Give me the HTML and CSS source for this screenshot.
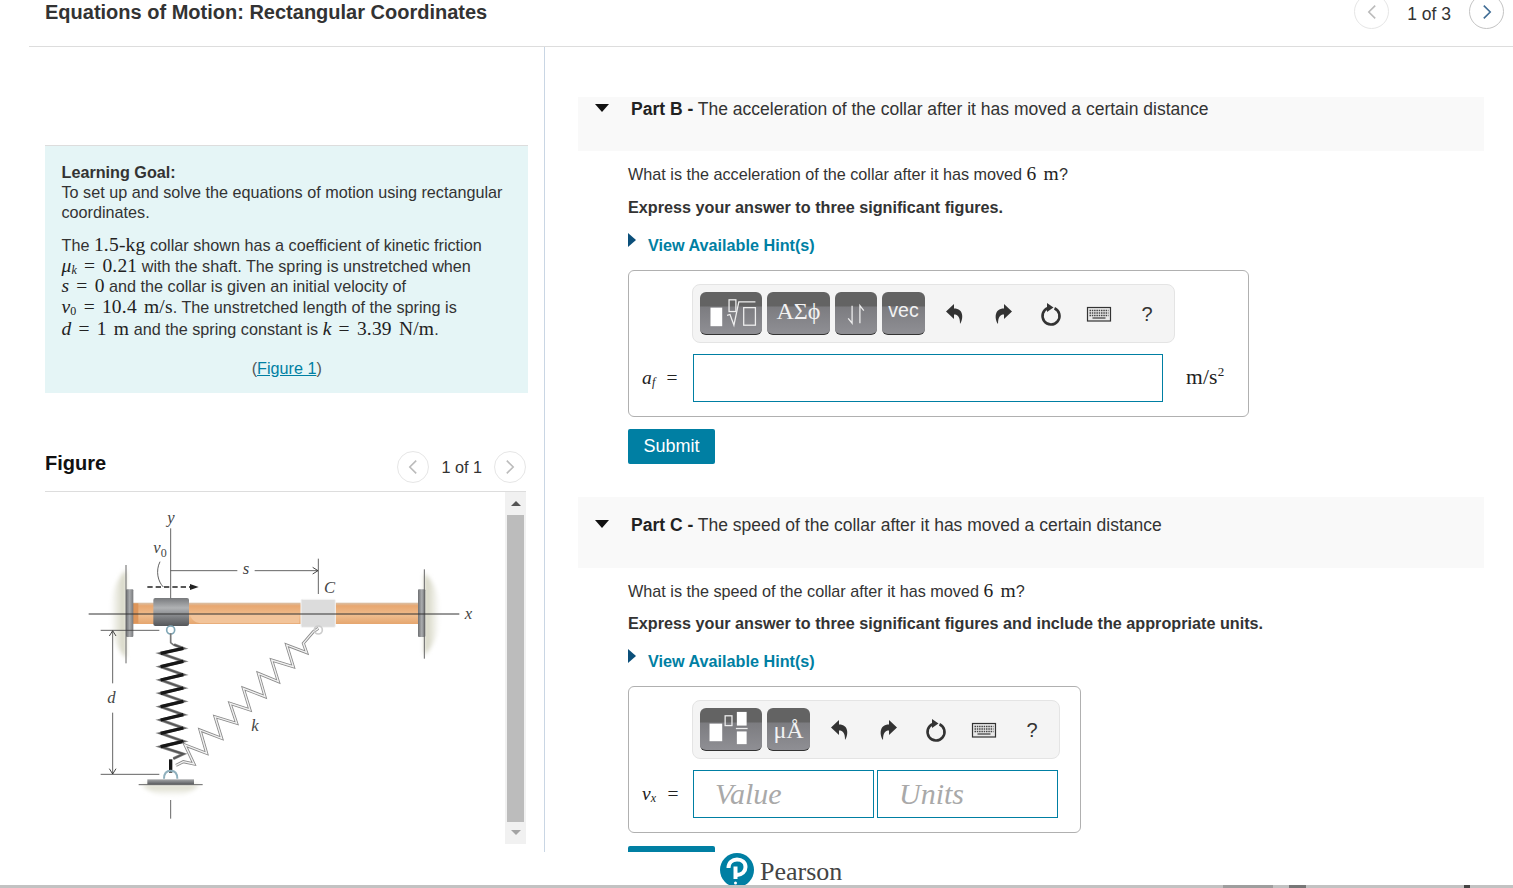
FILE: index.html
```html
<!DOCTYPE html>
<html lang="en">

<head>
    <meta charset="UTF-8">
    <title>Equations of Motion: Rectangular Coordinates</title>
    <link rel="stylesheet" href="styles.css">
</head>

<body>
    <svg class="sprites" width="0" height="0">
        <symbol id="undo" viewBox="0 0 48 24"><path d="M23 2 15 9.500 23 17V12.500C27 12.500 29 15 29 22 32.500 17 33 6.500 23 6.500z"/></symbol>
        <symbol id="redo" viewBox="0 0 48 24"><path d="M25 2 33 9.500 25 17V12.500C21 12.500 19 15 19 22 15.500 17 15 6.500 25 6.500z"/></symbol>
        <symbol id="reset" viewBox="0 0 48 24"><path class="ring" d="M27.500 6.200A8.500 8.500 0 1 1 21 6"/><path d="M20 1l6.500 4.500L20 10z"/></symbol>
        <symbol id="keys" viewBox="0 0 48 24">
            <rect class="kb" x="12.500" y="5.500" width="23" height="13.500"/>
            <path class="kb-dots" d="M14.500 8.500h19M14.500 11h19M14.500 13.500h19"/>
            <path class="kb-bar" d="M17.500 16h13"/>
        </symbol>
    </svg>

    <header class="top">
        <h1>Equations of Motion: Rectangular Coordinates</h1>
        <div class="pager pager-top">
            <span class="round off"><svg viewBox="0 0 12 20"><path d="M10 2 2 10l8 8"/></svg></span>
            <span class="count">1 of 3</span>
            <span class="round"><svg viewBox="0 0 12 20"><path d="M2 2l8 8-8 8"/></svg></span>
        </div>
    </header>

    <main class="main">
        <section class="left">
            <div class="goal">
                <p><b>Learning Goal:</b><br>To set up and solve the equations of motion using rectangular coordinates.</p>
                <p class="statement">The <span class="m">1.5-kg</span> collar shown has a coefficient of kinetic friction<br>
                    <span class="m"><i>μ<sub>k</sub></i> = 0.21</span> with the shaft. The spring is unstretched when<br>
                    <span class="m"><i>s</i> = 0</span> and the collar is given an initial velocity of<br>
                    <span class="m"><i>v</i><sub>0</sub> = 10.4 m/s</span>. The unstretched length of the spring is<br>
                    <span class="lastline"><span class="m"><i>d</i> = 1 m</span> and the spring constant is <span class="m"><i>k</i> = 3.39 N/m</span>.</span></p>
                <p class="figlink">(<a href="#">Figure 1</a>)</p>
            </div>

            <div class="fig-head">
                <h2>Figure</h2>
                <div class="pager">
                    <span class="round off"><svg viewBox="0 0 12 20"><path d="M10 2 2 10l8 8"/></svg></span>
                    <span class="count">1 of 1</span>
                    <span class="round off"><svg viewBox="0 0 12 20"><path d="M2 2l8 8-8 8"/></svg></span>
                </div>
            </div>
            <div class="fig-body">
                <!-- drawn in 3x units -->
                <svg class="diagram" viewBox="15 6 1380 1056" width="460" height="352">
                    <defs>
                        <linearGradient id="rod" x1="0" y1="0" x2="0" y2="1">
                            <stop offset="0" stop-color="#d9c2aa"/>
                            <stop offset=".15" stop-color="#e8a770"/>
                            <stop offset=".6" stop-color="#f0bd8d"/>
                            <stop offset="1" stop-color="#e5a66f"/>
                        </linearGradient>
                        <linearGradient id="steel" x1="0" y1="0" x2="0" y2="1">
                            <stop offset="0" stop-color="#77797c"/>
                            <stop offset=".35" stop-color="#b0b2b4"/>
                            <stop offset=".7" stop-color="#7c7e81"/>
                            <stop offset="1" stop-color="#55575a"/>
                        </linearGradient>
                        <linearGradient id="plate" x1="0" y1="0" x2="1" y2="0">
                            <stop offset="0" stop-color="#6d6f72"/>
                            <stop offset=".5" stop-color="#a9abad"/>
                            <stop offset="1" stop-color="#77797c"/>
                        </linearGradient>
                        <linearGradient id="base" x1="0" y1="0" x2="0" y2="1">
                            <stop offset="0" stop-color="#a5a7a9"/>
                            <stop offset="1" stop-color="#55575a"/>
                        </linearGradient>
                        <linearGradient id="shade-l" x1="1" y1="0" x2="0" y2="0">
                            <stop offset="0" stop-color="#cfcfba"/>
                            <stop offset="1" stop-color="#fff"/>
                        </linearGradient>
                        <linearGradient id="shade-r" x1="0" y1="0" x2="1" y2="0">
                            <stop offset="0" stop-color="#cfcfba"/>
                            <stop offset="1" stop-color="#fff"/>
                        </linearGradient>
                        <linearGradient id="shade-b" x1="0" y1="0" x2="0" y2="1">
                            <stop offset="0" stop-color="#d5d5c2"/>
                            <stop offset="1" stop-color="#fff"/>
                        </linearGradient>
                        <filter id="soft" x="-30%" y="-30%" width="160%" height="160%"><feGaussianBlur stdDeviation="7"/></filter>
                    </defs>

                    <g filter="url(#soft)">
                        <path d="M258 240C195 300 195 440 258 505z" fill="url(#shade-l)"/>
                        <path d="M1153 250C1215 300 1215 440 1153 495z" fill="url(#shade-r)"/>
                        <path d="M306 884C350 930 434 930 478 884z" fill="url(#shade-b)"/>
                    </g>

                    <rect x="275" y="338" width="862" height="64" fill="url(#rod)"/>
                    <rect x="275" y="340" width="20" height="60" fill="#dd955a"/>
                    <path d="M448 372c8 20 20 28 40 28H778v-28z" fill="#f2c49a"/>
                    <rect x="258" y="298" width="22" height="143" rx="3" fill="url(#plate)"/>
                    <rect x="1134" y="298" width="22" height="143" rx="3" fill="url(#plate)"/>
                    <path class="ln" d="M258 225v295M1153 238v268"/>

                    <rect x="340" y="324" width="107" height="84" rx="6" fill="url(#steel)"/>
                    <rect x="783" y="328" width="103" height="84" rx="4" fill="#dcdcdc" stroke="#f4f4f4" stroke-width="3"/>

                    <path class="ln" d="M392 115V325M392 930v56M835 206v106"/>
                    <path class="axis" d="M146 372h1112"/>
                    <path class="dim" d="M392 242h200M644 242h188M182 421h176M182 853h176M218 424v156M218 668v184"/>
                    <path class="tip" d="M818 232l16 10-16 10M208 438l10-16 10 16M208 836l10 16 10-16"/>
                    <path class="dash" d="M322 291h128"/>
                    <path d="M450 282l26 9-26 9z" fill="#222"/>
                    <path class="dim" d="M360 215c-14 28-6 60 10 76"/>

                    <circle cx="392" cy="420" r="12" fill="none" stroke="#7fa6b5" stroke-width="5"/>
                    <path class="wire" d="M392 430v28l10 8"/>
                    <path class="coil-out" d="M402 464l28 11-68 15 68 24-68 16 68 24-68 16 68 24-68 16 68 24-68 16 68 24-68 16 68 24-68 16 68 24-68 16 68 22-30 14"/>
                    <path class="coil-mid" d="M402 464l28 11-68 15 68 24-68 16 68 24-68 16 68 24-68 16 68 24-68 16 68 24-68 16 68 24-68 16 68 24-68 16 68 22-30 14"/>
                    <path class="coil-dark" d="M430 475l-68 15M430 514l-68 16M430 554l-68 16M430 594l-68 16M430 634l-68 16M430 674l-68 16M430 714l-68 16M430 754l-68 16"/>
                    <path class="coil-dark" d="M392 808v40"/>

                    <path class="coil-out" d="M408 826l22-11 32 7-27-57 65 25-20-70 65 25-20-65 65 20-20-60 60 20-20-65 65 25-20-70 60 25-20-65 65 20-20-65 60 23-10-28 30-35 15-10"/>
                    <path class="coil-in" d="M408 826l22-11 32 7-27-57 65 25-20-70 65 25-20-65 65 20-20-60 60 20-20-65 65 25-20-70 60 25-20-65 65 20-20-65 60 23-10-28 30-35 15-10"/>
                    <circle cx="835" cy="420" r="12" fill="none" stroke="#ccc" stroke-width="5"/>

                    <path d="M372 866c0-16 8-24 20-24s20 8 20 24" fill="none" stroke="#8fb0bd" stroke-width="6"/>
                    <rect x="322" y="868" width="140" height="16" fill="url(#base)"/>
                    <path class="ln" d="M296 884h192"/>

                    <text class="lbl" x="382" y="98">y</text>
                    <text class="lbl" x="340" y="188">v<tspan class="lbl-up" dy="12">0</tspan></text>
                    <text class="lbl" x="608" y="252">s</text>
                    <text class="lbl" x="852" y="310">C</text>
                    <text class="lbl" x="1274" y="386">x</text>
                    <text class="lbl" x="202" y="640">d</text>
                    <text class="lbl" x="634" y="722">k</text>
                </svg>
                <div class="scroll">
                    <span class="arr up"></span>
                    <div class="thumb"></div>
                    <span class="arr down"></span>
                </div>
            </div>
        </section>

        <section class="right">
            <div class="part part-b"><span class="caret"></span><b>Part B -</b> The acceleration of the collar after it has moved a certain distance</div>
            <p class="q">What is the acceleration of the collar after it has moved <span class="m">6 m</span>?</p>
            <p class="q strong">Express your answer to three significant figures.</p>
            <p class="hint"><span class="hint-caret"></span><a href="#">View Available Hint(s)</a></p>

            <div class="answer answer-b">
                <div class="bar">
                    <span class="btn w62">
                        <svg viewBox="0 0 62 43"><rect class="wh" x="10" y="16" width="12" height="19"/><rect class="tr" x="29" y="8" width="7" height="12"/><path class="tr" d="M27 24l3-1 4 11 5-24h17"/><rect class="tr" x="44" y="16" width="12" height="18"/></svg>
                    </span>
                    <span class="btn w63 sym">ΑΣϕ</span>
                    <span class="btn w42">
                        <svg viewBox="0 0 42 43"><path class="tr" d="M17 14v18l-4-5M25 32V14l4 5"/></svg>
                    </span>
                    <span class="btn w43 vec">vec</span>
                    <span class="tools">
                        <svg class="tool"><use href="#undo"/></svg>
                        <svg class="tool"><use href="#redo"/></svg>
                        <svg class="tool"><use href="#reset"/></svg>
                        <svg class="tool"><use href="#keys"/></svg>
                        <span class="tool help">?</span>
                    </span>
                </div>
                <div class="row">
                    <span class="lab m"><i>a<sub>f</sub></i> =</span>
                    <input class="inp wide" type="text">
                    <span class="unit m">m/s<sup>2</sup></span>
                </div>
            </div>
            <button class="submit">Submit</button>

            <div class="part part-c"><span class="caret"></span><b>Part C -</b> The speed of the collar after it has moved a certain distance</div>
            <p class="q">What is the speed of the collar after it has moved <span class="m">6 m</span>?</p>
            <p class="q strong tight">Express your answer to three significant figures and include the appropriate units.</p>
            <p class="hint"><span class="hint-caret"></span><a href="#">View Available Hint(s)</a></p>

            <div class="answer answer-c">
                <div class="bar">
                    <span class="btn w62">
                        <svg viewBox="0 0 62 43"><rect class="wh" x="9" y="16" width="13" height="18"/><rect class="tr" x="25" y="8" width="7" height="10"/><rect class="wh" x="37" y="4" width="10" height="14"/><path class="tr" d="M36 21h12"/><rect class="wh" x="37" y="24" width="10" height="13"/></svg>
                    </span>
                    <span class="btn w43 mu">μÅ</span>
                    <span class="tools">
                        <svg class="tool"><use href="#undo"/></svg>
                        <svg class="tool"><use href="#redo"/></svg>
                        <svg class="tool"><use href="#reset"/></svg>
                        <svg class="tool"><use href="#keys"/></svg>
                        <span class="tool help">?</span>
                    </span>
                </div>
                <div class="row">
                    <span class="lab m"><i>v<sub>x</sub></i> =</span>
                    <input class="inp half" type="text" placeholder="Value">
                    <input class="inp half" type="text" placeholder="Units">
                </div>
            </div>
            <button class="submit"></button>
        </section>
    </main>

    <footer class="foot">
        <svg class="logo" viewBox="0 0 34 34" width="34" height="34">
            <circle cx="17" cy="17" r="17" fill="#007fa3"/>
            <path class="logo-p" d="M8.500 15C8.500 9.500 12.500 6.500 17 6.500 22 6.500 25.500 9.500 25.500 14 25.500 18.500 22 21.500 17 22M15.500 13.500V26"/>
            <circle cx="15.500" cy="30" r="1.500" fill="#fff"/>
        </svg>
        <span class="brand">Pearson</span>
    </footer>
    <div class="edge"></div>
</body>

</html>
```

FILE: styles.css
```css
html,
body {
    margin: 0;
    height: 100%;
    overflow: hidden;
    background: #fff;
}

body {
    font-family: "Liberation Sans", Arial, sans-serif;
    font-size: 16.200px;
    color: #333;
    display: flex;
    flex-direction: column;
}

.sprites {
    position: absolute;
}

p {
    margin: 0;
}

a {
    color: #007fa3;
}

/* math runs */
.m {
    font-family: "Liberation Serif", "Times New Roman", serif;
    font-size: 19.500px;
    line-height: 1;
    letter-spacing: .2px;
    word-spacing: 2px;
    color: #222;
}

.m sub {
    font-size: 12px;
    line-height: 0;
    vertical-align: -2px;
}

.m sup {
    font-size: 13px;
    line-height: 0;
}

/* header */
.top {
    height: 46px;
    margin-left: 29px;
    border-bottom: 1px solid #ddd;
    display: flex;
    justify-content: space-between;
    flex: none;
}

.top h1 {
    margin: 0 0 0 16px;
    font-size: 20px;
    line-height: 24px;
    color: #333;
}

.pager {
    display: flex;
    align-items: center;
}

.pager-top {
    height: 35px;
    margin-top: -6px;
    margin-right: 9px;
}

.round {
    width: 33px;
    height: 33px;
    border: 1px solid #c4c4c4;
    border-radius: 50%;
    display: flex;
    align-items: center;
    justify-content: center;
    background: #fff;
}

.round svg {
    width: 10px;
    height: 16px;
    fill: none;
    stroke: #3f6c94;
    stroke-width: 2;
}

.round.off {
    border-color: #e6e6e6;
}

.round.off svg {
    stroke: #bbb;
}

.count {
    margin: 0 12px;
}

.pager-top .count {
    margin: 6px 18px 0;
    font-size: 17.500px;
}

.main {
    height: 805px;
    flex: none;
    display: flex;
}

/* left column */
.left {
    width: 483px;
    margin-left: 45px;
    margin-right: 16px;
    padding-top: 98px;
    flex: none;
}

.goal {
    height: 248px;
    box-sizing: border-box;
    border-top: 1px solid #ddd;
    background: #e5f5f6;
    padding: 16px 16px 0 16.500px;
    line-height: 20px;
}

.statement {
    margin-top: 13px;
    line-height: 20.500px;
}

.lastline {
    display: block;
    margin-top: 2px;
}

.figlink {
    margin-top: 18px;
    text-align: center;
    color: #555;
}

.fig-head {
    width: 481px;
    height: 40px;
    margin-top: 58px;
    display: flex;
    justify-content: space-between;
    align-items: flex-start;
}

.fig-head h2 {
    margin: 0;
    font-size: 20px;
    line-height: 24px;
    color: #111;
}

.fig-head .round {
    width: 30px;
    height: 30px;
}

.fig-body {
    width: 481px;
    height: 352px;
    border-top: 1px solid #ddd;
    display: flex;
}

.diagram {
    width: 460px;
    height: 352px;
    display: block;
    flex: none;
}

.scroll {
    width: 21px;
    background: #f1f1f1;
    display: flex;
    flex-direction: column;
    align-items: center;
}

.thumb {
    width: 17px;
    height: 307px;
    background: #bcbcbc;
}

.arr {
    width: 0;
    height: 0;
    border-left: 5px solid transparent;
    border-right: 5px solid transparent;
}

.arr.up {
    margin: 9px 0 9px;
    border-bottom: 5px solid #555;
}

.arr.down {
    margin: 8px 0;
    border-top: 5px solid #a3a3a3;
}

/* diagram strokes */
.ln {
    fill: none;
    stroke: #666;
    stroke-width: 3;
}

.axis {
    fill: none;
    stroke: #333;
    stroke-width: 3;
}

.dim {
    fill: none;
    stroke: #444;
    stroke-width: 2.500;
}

.tip {
    fill: none;
    stroke: #222;
    stroke-width: 2.500;
}

.dash {
    fill: none;
    stroke: #222;
    stroke-width: 4;
    stroke-dasharray: 16 9;
}

.wire {
    fill: none;
    stroke: #777;
    stroke-width: 5;
}

.coil-dark {
    fill: none;
    stroke: #161616;
    stroke-width: 10;
}

.coil-mid {
    fill: none;
    stroke: #555;
    stroke-width: 5;
}

.coil-out {
    fill: none;
    stroke: #8a8a8a;
    stroke-width: 9;
}

.coil-in {
    fill: none;
    stroke: #f2f2f2;
    stroke-width: 4;
}

.lbl {
    font-family: "Liberation Serif", serif;
    font-style: italic;
    font-size: 50px;
    fill: #444;
}

.lbl-up {
    font-style: normal;
    font-size: 36px;
}

/* right column */
.right {
    flex: 1;
    min-width: 0;
    border-left: 1px solid #c9d6e4;
    padding: 50px 29px 0 33px;
    overflow: hidden;
}

.part {
    display: block;
    padding: 1px 0 0 53px;
    background: #f9f9f9;
    font-size: 17.500px;
    line-height: 22px;
    position: relative;
    box-sizing: border-box;
    color: #333;
}

.part b {
    color: #222;
}

.part-b {
    height: 54px;
}

.part-c {
    height: 71px;
    margin-top: 33px;
    padding-top: 17px;
}

.caret {
    position: absolute;
    left: 17px;
    top: 7px;
    border-left: 7px solid transparent;
    border-right: 7px solid transparent;
    border-top: 8px solid #111;
}

.part-c .caret {
    top: 23px;
}

.q {
    margin: 13px 0 0 50px;
    line-height: 20px;
}

.strong {
    font-weight: bold;
    color: #333;
}

.tight {
    margin-top: 12px;
}

.hint {
    margin: 18px 0 0 50px;
    line-height: 20px;
    font-weight: bold;
    padding-left: 20px;
    position: relative;
}

.hint a {
    text-decoration: none;
}

.hint-caret {
    position: absolute;
    left: 0;
    top: -2px;
    border-top: 7px solid transparent;
    border-bottom: 7px solid transparent;
    border-left: 8px solid #0b4f7a;
}

.answer {
    margin: 15px 0 0 50px;
    height: 147px;
    box-sizing: border-box;
    border: 1px solid #b0b0b0;
    border-radius: 6px;
    padding: 13px 0 0 13px;
}

.answer-b {
    width: 621px;
}

.answer-c {
    width: 453px;
}

.bar {
    margin-left: 50px;
    height: 59px;
    box-sizing: border-box;
    background: #f4f4f4;
    border: 1px solid #e4e4e4;
    border-radius: 8px;
    padding: 7px;
    display: flex;
    gap: 5px;
}

.answer-b .bar {
    width: 483px;
}

.answer-c .bar {
    width: 368px;
}

.btn {
    height: 43px;
    box-sizing: border-box;
    border-radius: 6px;
    border-bottom: 1px solid #333;
    background: linear-gradient(#636363 0, #636363 14px, #7c7c80 15px, #8f8f94 100%);
    color: #f2f2f2;
    display: flex;
    align-items: center;
    justify-content: center;
    flex: none;
}

.btn svg {
    width: 100%;
    height: 100%;
}

.w62 {
    width: 62px;
}

.w63 {
    width: 63px;
}

.w42 {
    width: 42px;
}

.w43 {
    width: 43px;
}

.wh {
    fill: #fff;
}

.tr {
    fill: none;
    stroke: #eee;
    stroke-width: 1.300;
}

.sym {
    font-family: "Liberation Serif", serif;
    font-size: 24px;
    padding-bottom: 3px;
}

.vec {
    font-size: 19.500px;
    padding-bottom: 6px;
}

.mu {
    font-family: "Liberation Serif", serif;
    font-size: 24px;
    padding-top: 3px;
    width: 43px;
}

.tools {
    display: flex;
    margin-left: 1px;
    align-items: center;
}

.tool {
    width: 48px;
    height: 24px;
    fill: #333;
}

.help {
    text-align: center;
    font-size: 20px;
    line-height: 24px;
    color: #333;
}

.ring {
    fill: none;
    stroke: #333;
    stroke-width: 2.600;
}

.kb {
    fill: #e8e8e8;
    stroke: #333;
    stroke-width: 1.200;
}

.kb-dots {
    fill: none;
    stroke: #444;
    stroke-width: 1.300;
    stroke-dasharray: 1.500 .8;
}

.kb-bar {
    fill: none;
    stroke: #444;
    stroke-width: 1.300;
}

.row {
    margin-top: 11px;
    display: flex;
    align-items: center;
}

.lab {
    width: 51px;
    flex: none;
    white-space: nowrap;
    word-spacing: 6px;
}

.inp {
    height: 48px;
    box-sizing: border-box;
    border: 1px solid #007fa3;
    border-radius: 0;
    background: #fff;
    padding: 0 21px;
    font-family: "Liberation Serif", serif;
    font-style: italic;
    font-size: 30px;
    outline: none;
}

.inp::placeholder {
    color: #a9a9a9;
    opacity: 1;
}

.wide {
    width: 470px;
}

.half {
    width: 181px;
    margin-right: 3px;
}

.unit {
    margin-left: 23px;
    font-size: 21.500px;
}

.submit {
    display: block;
    margin: 12px 0 0 50px;
    width: 87px;
    height: 35px;
    border: 0;
    border-radius: 2px;
    background: #007fa3;
    color: #fff;
    font-family: "Liberation Sans", Arial, sans-serif;
    font-size: 18px;
    padding: 0;
}

.answer-c + .submit {
    margin-top: 13px;
}

/* footer */
.foot {
    height: 33px;
    flex: none;
    overflow: hidden;
    display: flex;
    align-items: flex-start;
    padding-left: 720px;
}

.logo {
    margin-top: 1px;
    flex: none;
}

.logo-p {
    fill: none;
    stroke: #fff;
    stroke-width: 4;
}

.brand {
    margin: 4px 0 0 6px;
    font-family: "Liberation Serif", serif;
    font-size: 26px;
    line-height: 32px;
    color: #444;
}

.edge {
    height: 3px;
    flex: none;
    background:
        linear-gradient(#444, #444) 1464px 0 / 6px 3px no-repeat,
        linear-gradient(#9e9e9e, #9e9e9e) 1223px 0 / 50px 3px no-repeat,
        linear-gradient(#777, #777) 1289px 0 / 17px 3px no-repeat,
        #c2c2c2;
}
```
